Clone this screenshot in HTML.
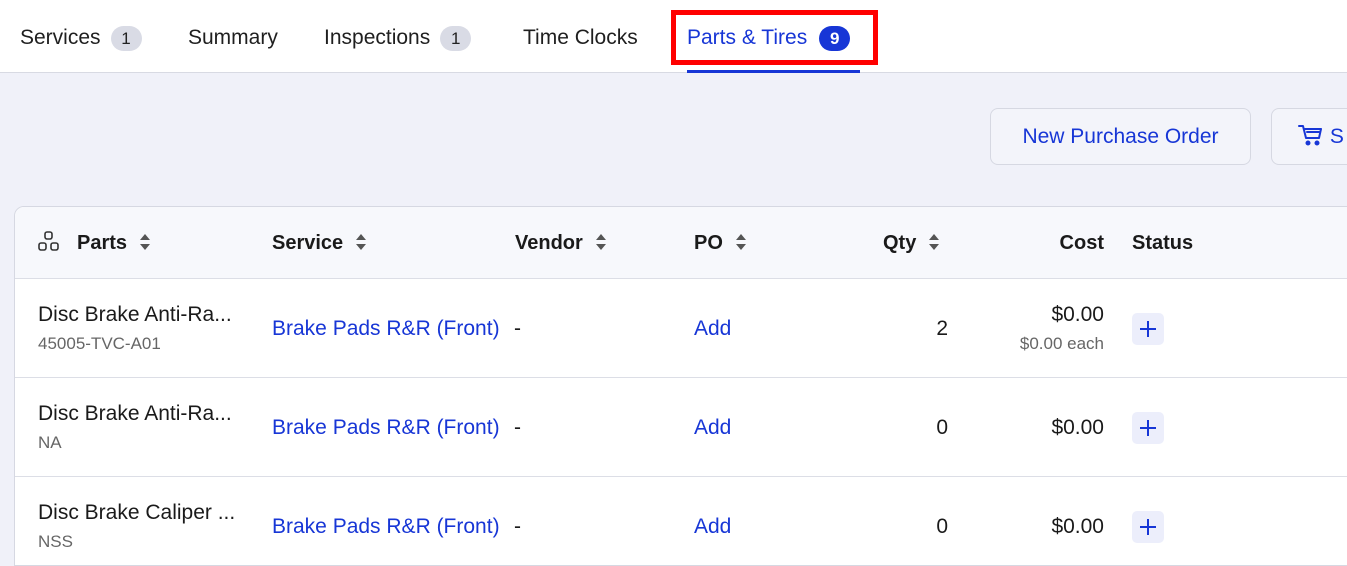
<!DOCTYPE html>
<html><head><style>
*{margin:0;padding:0;box-sizing:border-box}
body{width:1347px;height:549px;overflow:hidden;background:#f0f1f9;font-family:"Liberation Sans",sans-serif;position:relative;color:#1a1a1a}
.a{position:absolute;white-space:nowrap}
.top{position:absolute;left:0;top:0;width:1347px;height:73px;background:#fff;border-bottom:1px solid #d8dae3}
.tab{font-size:21px;top:24px;line-height:28px;height:28px;color:#1f1f1f}
.badge{display:inline-block;width:31px;height:25px;border-radius:13px;background:#d9dbe5;font-size:17px;text-align:center;line-height:25px;color:#222;vertical-align:top;margin-top:2px;margin-left:10px}
.btn{position:absolute;top:108px;height:57px;border:1px solid #d6d8e2;border-radius:8px;background:#f3f4fa;color:#1736d6;font-size:21px;line-height:55px}
.card{position:absolute;left:14px;top:206px;width:1360px;height:360px;background:#fff;border:1px solid #d6d8e2;border-radius:10px 0 0 0;overflow:hidden}
.hdr{position:absolute;left:0;top:0;width:100%;height:72px;background:#f7f8fc;border-bottom:1px solid #dcdee6}
.h{font-size:20px;font-weight:bold;top:24px;line-height:24px;color:#1a1a1a}
.sort{display:inline-block;margin-left:12px;vertical-align:-2px}
.row{position:absolute;left:0;width:100%;border-bottom:1px solid #dcdee6}
.t{font-size:21px}
.sub{font-size:17px;color:#666}
.blue{color:#1736d6}
.svc{overflow:hidden;width:231px}
.plus{position:absolute;width:32px;height:32px;background:#eceefb;border-radius:5px}
</style></head><body>
<div class="top"></div>
<div class="a tab" style="left:20px">Services<span class="badge">1</span></div>
<div class="a tab" style="left:188px">Summary</div>
<div class="a tab" style="left:324px">Inspections<span class="badge">1</span></div>
<div class="a tab" style="left:523px">Time Clocks</div>
<div class="a tab" style="left:687px;color:#1736d6">Parts &amp; Tires<span class="badge" style="background:#1736d6;color:#fff;width:31px;font-weight:bold;margin-left:12px">9</span></div>
<div class="a" style="left:687px;top:70px;width:173px;height:3px;background:#1736d6"></div>
<div class="a" style="left:671px;top:10px;width:207px;height:55px;border:5px solid #f00"></div>

<div class="btn" style="left:990px;width:261px;text-align:center">New Purchase Order</div>
<div class="btn" style="left:1271px;width:120px;padding-left:26px">
<svg width="26" height="24" viewBox="0 0 26 24" style="vertical-align:-4px" fill="none" stroke="#1736d6" stroke-width="2" stroke-linecap="round" stroke-linejoin="round"><path d="M1 3h4l3 12h13l2-9H7"/><path d="M9 9h12"/><circle cx="10" cy="20" r="1.5" fill="#1736d6"/><circle cx="19" cy="20" r="1.5" fill="#1736d6"/></svg> S</div>

<div class="card">
<div class="hdr"></div>
<svg class="a" style="left:23px;top:24px" width="22" height="22" viewBox="0 0 22 22" fill="none" stroke="#333" stroke-width="1.6"><rect x="7" y="1" width="7" height="7" rx="2"/><rect x="1" y="12" width="7" height="7" rx="2"/><rect x="13" y="12" width="7" height="7" rx="2"/></svg>
<div class="a h" style="left:62px">Parts<svg class="sort" width="12" height="18" viewBox="0 0 12 18"><path d="M6 1l5 6H1z M6 17l5-6H1z" fill="#555"/></svg></div>
<div class="a h" style="left:257px">Service<svg class="sort" width="12" height="18" viewBox="0 0 12 18"><path d="M6 1l5 6H1z M6 17l5-6H1z" fill="#555"/></svg></div>
<div class="a h" style="left:500px">Vendor<svg class="sort" width="12" height="18" viewBox="0 0 12 18"><path d="M6 1l5 6H1z M6 17l5-6H1z" fill="#555"/></svg></div>
<div class="a h" style="left:679px">PO<svg class="sort" width="12" height="18" viewBox="0 0 12 18"><path d="M6 1l5 6H1z M6 17l5-6H1z" fill="#555"/></svg></div>
<div class="a h" style="left:868px">Qty<svg class="sort" width="12" height="18" viewBox="0 0 12 18"><path d="M6 1l5 6H1z M6 17l5-6H1z" fill="#555"/></svg></div>
<div class="a h" style="right:269px">Cost</div>
<div class="a h" style="left:1117px">Status</div>

<div class="row" style="top:72px;height:99px">
<div class="a t" style="left:23px;top:24px">Disc Brake Anti-Ra...</div>
<div class="a sub" style="left:23px;top:55px">45005-TVC-A01</div>
<div class="a t blue svc" style="left:257px;top:38px">Brake Pads R&amp;R (Front)</div>
<div class="a t" style="left:499px;top:38px">-</div>
<div class="a t blue" style="left:679px;top:38px">Add</div>
<div class="a t" style="right:425px;top:38px">2</div>
<div class="a t" style="right:269px;top:24px">$0.00</div>
<div class="a sub" style="right:269px;top:55px">$0.00 each</div>
<div class="plus" style="left:1117px;top:34px"><svg width="32" height="32"><path d="M16 8v16M8 16h16" stroke="#1736d6" stroke-width="2"/></svg></div>
</div>

<div class="row" style="top:171px;height:99px">
<div class="a t" style="left:23px;top:24px">Disc Brake Anti-Ra...</div>
<div class="a sub" style="left:23px;top:55px">NA</div>
<div class="a t blue svc" style="left:257px;top:38px">Brake Pads R&amp;R (Front)</div>
<div class="a t" style="left:499px;top:38px">-</div>
<div class="a t blue" style="left:679px;top:38px">Add</div>
<div class="a t" style="right:425px;top:38px">0</div>
<div class="a t" style="right:269px;top:38px">$0.00</div>
<div class="plus" style="left:1117px;top:34px"><svg width="32" height="32"><path d="M16 8v16M8 16h16" stroke="#1736d6" stroke-width="2"/></svg></div>
</div>

<div class="row" style="top:270px;height:99px;border:0">
<div class="a t" style="left:23px;top:24px">Disc Brake Caliper ...</div>
<div class="a sub" style="left:23px;top:55px">NSS</div>
<div class="a t blue svc" style="left:257px;top:38px">Brake Pads R&amp;R (Front)</div>
<div class="a t" style="left:499px;top:38px">-</div>
<div class="a t blue" style="left:679px;top:38px">Add</div>
<div class="a t" style="right:425px;top:38px">0</div>
<div class="a t" style="right:269px;top:38px">$0.00</div>
<div class="plus" style="left:1117px;top:34px"><svg width="32" height="32"><path d="M16 8v16M8 16h16" stroke="#1736d6" stroke-width="2"/></svg></div>
</div>
</div>
</body></html>
